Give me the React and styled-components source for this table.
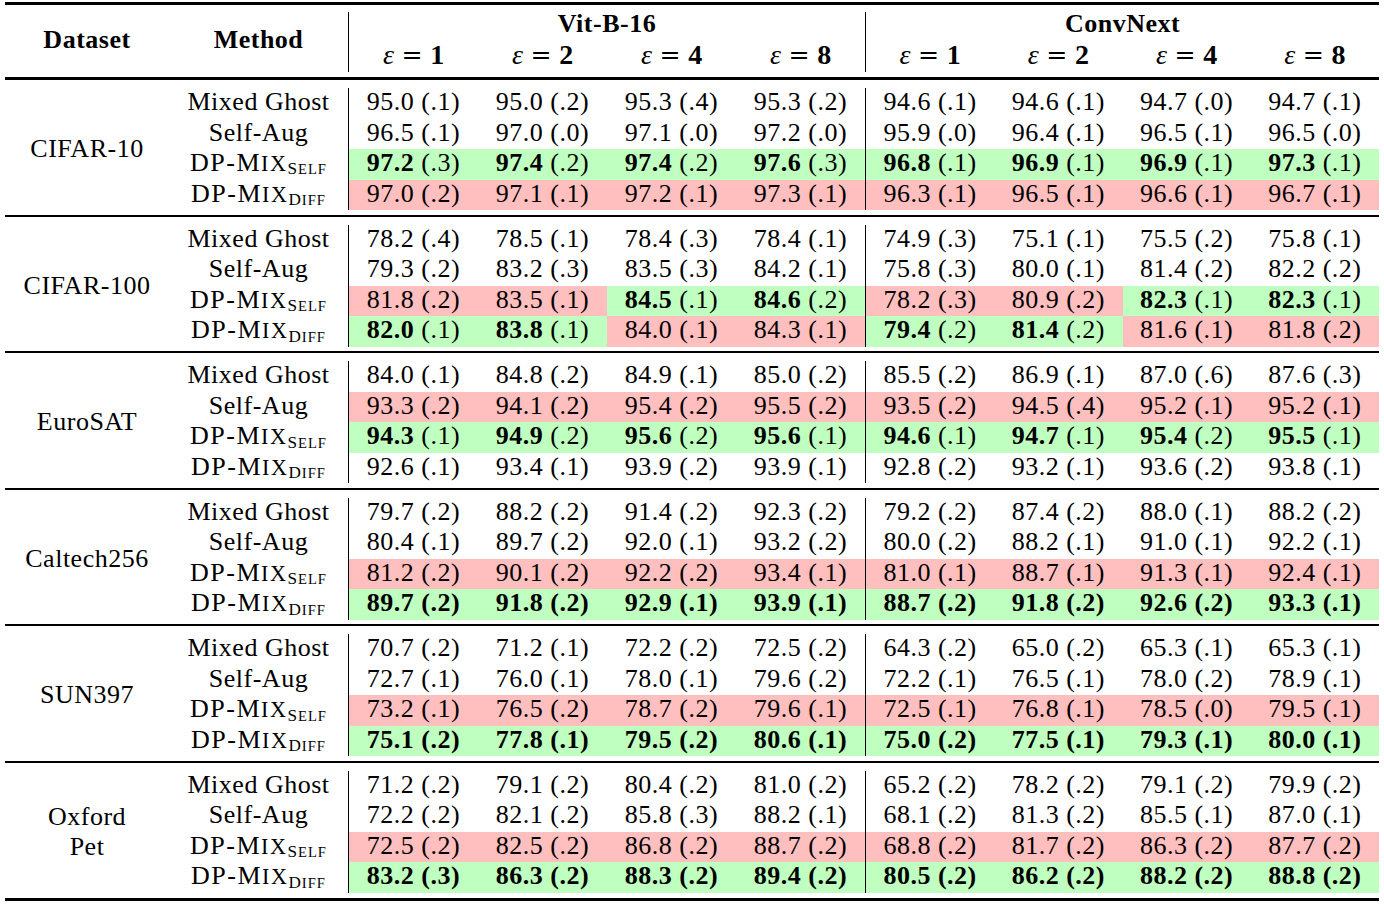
import React from 'react';
import styled, { createGlobalStyle } from 'styled-components';

const GlobalStyle = createGlobalStyle`
  html, body { margin: 0; padding: 0; background: #ffffff; }
  body {
    font-family: "Liberation Serif", "Times New Roman", serif;
    color: #000000;
  }
`;

const COLS = '164px 179px 1px repeat(4, 129px) 1px repeat(4, 1fr)';

const Table = styled.div`
  width: 1374px;
  margin: 2px 0 0 5px;
  border-top: 3px solid #000;
  border-bottom: 3px solid #000;
  font-size: 26px;
  letter-spacing: 0.5px;
`;

const Header = styled.div`
  display: grid;
  grid-template-columns: ${COLS};
  grid-template-rows: 30px 30px;
  padding: 7px 0 5px;
  border-bottom: 3px solid #000;
  line-height: 24px;
`;

const HeadLabel = styled.div`
  grid-column: ${p => p.$col};
  grid-row: 1 / 3;
  align-self: center;
  padding-bottom: 5px;
  text-align: center;
  font-weight: 700;
`;

const ModelHead = styled.div`
  grid-column: ${p => p.$col} / span 4;
  grid-row: 1;
  align-self: start;
  text-align: center;
  font-weight: 700;
`;

const EpsHead = styled.div`
  align-self: start;
  padding-top: 1px;
  text-align: center;
  white-space: nowrap;
  font-size: 28px;
  letter-spacing: 0;
`;

const Eps = styled.i`
  font-style: italic;
`;

const Eq = styled.span`
  display: inline-block;
  margin: 0 0.3em;
  font-family: "DejaVu Serif", "Liberation Serif", serif;
  font-size: 0.9em;
`;

const EpsNum = styled.b`
  font-weight: 700;
`;

const VRule = styled.div`
  grid-column: ${p => p.$col};
  grid-row: 1 / -1;
  background: #000;
  width: 1px;
`;

const Block = styled.div`
  display: grid;
  grid-template-columns: ${COLS};
  grid-template-rows: repeat(4, 30.5px);
  padding: 8px 0 4.6px;
  line-height: 27px;
  & + & {
    border-top: 2px solid #000;
  }
`;

const DatasetCell = styled.div`
  grid-column: 1;
  grid-row: 1 / -1;
  align-self: center;
  text-align: center;
  line-height: 30px;
`;

const MethodCell = styled.div`
  text-align: center;
  white-space: nowrap;
`;

const MixName = styled.span`
  letter-spacing: 1.5px;
`;

const Sc = styled.span`
  font-size: 0.85em;
`;

const Sub = styled.span`
  font-size: 0.66em;
  vertical-align: -0.2em;
  line-height: 1;
  letter-spacing: 1px;
`;

const Value = styled.div`
  text-align: center;
  white-space: nowrap;
  background: ${p => (p.$tone === 'g' ? '#bfffbf' : p.$tone === 'r' ? '#ffbfbf' : 'transparent')};
`;

const Strong = styled.b`
  font-weight: 700;
`;

const METHODS = ['mg', 'sa', 'self', 'diff'];

const data = [
  {
    name: ['CIFAR-10'],
    boldAll: false,
    tones: ['', '', 'gggggggg', 'rrrrrrrr'],
    rows: [
      ['95.0 (.1)', '95.0 (.2)', '95.3 (.4)', '95.3 (.2)', '94.6 (.1)', '94.6 (.1)', '94.7 (.0)', '94.7 (.1)'],
      ['96.5 (.1)', '97.0 (.0)', '97.1 (.0)', '97.2 (.0)', '95.9 (.0)', '96.4 (.1)', '96.5 (.1)', '96.5 (.0)'],
      ['97.2 (.3)', '97.4 (.2)', '97.4 (.2)', '97.6 (.3)', '96.8 (.1)', '96.9 (.1)', '96.9 (.1)', '97.3 (.1)'],
      ['97.0 (.2)', '97.1 (.1)', '97.2 (.1)', '97.3 (.1)', '96.3 (.1)', '96.5 (.1)', '96.6 (.1)', '96.7 (.1)'],
    ],
  },
  {
    name: ['CIFAR-100'],
    boldAll: false,
    tones: ['', '', 'rrggrrgg', 'ggrrggrr'],
    rows: [
      ['78.2 (.4)', '78.5 (.1)', '78.4 (.3)', '78.4 (.1)', '74.9 (.3)', '75.1 (.1)', '75.5 (.2)', '75.8 (.1)'],
      ['79.3 (.2)', '83.2 (.3)', '83.5 (.3)', '84.2 (.1)', '75.8 (.3)', '80.0 (.1)', '81.4 (.2)', '82.2 (.2)'],
      ['81.8 (.2)', '83.5 (.1)', '84.5 (.1)', '84.6 (.2)', '78.2 (.3)', '80.9 (.2)', '82.3 (.1)', '82.3 (.1)'],
      ['82.0 (.1)', '83.8 (.1)', '84.0 (.1)', '84.3 (.1)', '79.4 (.2)', '81.4 (.2)', '81.6 (.1)', '81.8 (.2)'],
    ],
  },
  {
    name: ['EuroSAT'],
    boldAll: false,
    tones: ['', 'rrrrrrrr', 'gggggggg', ''],
    rows: [
      ['84.0 (.1)', '84.8 (.2)', '84.9 (.1)', '85.0 (.2)', '85.5 (.2)', '86.9 (.1)', '87.0 (.6)', '87.6 (.3)'],
      ['93.3 (.2)', '94.1 (.2)', '95.4 (.2)', '95.5 (.2)', '93.5 (.2)', '94.5 (.4)', '95.2 (.1)', '95.2 (.1)'],
      ['94.3 (.1)', '94.9 (.2)', '95.6 (.2)', '95.6 (.1)', '94.6 (.1)', '94.7 (.1)', '95.4 (.2)', '95.5 (.1)'],
      ['92.6 (.1)', '93.4 (.1)', '93.9 (.2)', '93.9 (.1)', '92.8 (.2)', '93.2 (.1)', '93.6 (.2)', '93.8 (.1)'],
    ],
  },
  {
    name: ['Caltech256'],
    boldAll: true,
    tones: ['', '', 'rrrrrrrr', 'gggggggg'],
    rows: [
      ['79.7 (.2)', '88.2 (.2)', '91.4 (.2)', '92.3 (.2)', '79.2 (.2)', '87.4 (.2)', '88.0 (.1)', '88.2 (.2)'],
      ['80.4 (.1)', '89.7 (.2)', '92.0 (.1)', '93.2 (.2)', '80.0 (.2)', '88.2 (.1)', '91.0 (.1)', '92.2 (.1)'],
      ['81.2 (.2)', '90.1 (.2)', '92.2 (.2)', '93.4 (.1)', '81.0 (.1)', '88.7 (.1)', '91.3 (.1)', '92.4 (.1)'],
      ['89.7 (.2)', '91.8 (.2)', '92.9 (.1)', '93.9 (.1)', '88.7 (.2)', '91.8 (.2)', '92.6 (.2)', '93.3 (.1)'],
    ],
  },
  {
    name: ['SUN397'],
    boldAll: true,
    tones: ['', '', 'rrrrrrrr', 'gggggggg'],
    rows: [
      ['70.7 (.2)', '71.2 (.1)', '72.2 (.2)', '72.5 (.2)', '64.3 (.2)', '65.0 (.2)', '65.3 (.1)', '65.3 (.1)'],
      ['72.7 (.1)', '76.0 (.1)', '78.0 (.1)', '79.6 (.2)', '72.2 (.1)', '76.5 (.1)', '78.0 (.2)', '78.9 (.1)'],
      ['73.2 (.1)', '76.5 (.2)', '78.7 (.2)', '79.6 (.1)', '72.5 (.1)', '76.8 (.1)', '78.5 (.0)', '79.5 (.1)'],
      ['75.1 (.2)', '77.8 (.1)', '79.5 (.2)', '80.6 (.1)', '75.0 (.2)', '77.5 (.1)', '79.3 (.1)', '80.0 (.1)'],
    ],
  },
  {
    name: ['Oxford', 'Pet'],
    boldAll: true,
    tones: ['', '', 'rrrrrrrr', 'gggggggg'],
    rows: [
      ['71.2 (.2)', '79.1 (.2)', '80.4 (.2)', '81.0 (.2)', '65.2 (.2)', '78.2 (.2)', '79.1 (.2)', '79.9 (.2)'],
      ['72.2 (.2)', '82.1 (.2)', '85.8 (.3)', '88.2 (.1)', '68.1 (.2)', '81.3 (.2)', '85.5 (.1)', '87.0 (.1)'],
      ['72.5 (.2)', '82.5 (.2)', '86.8 (.2)', '88.7 (.2)', '68.8 (.2)', '81.7 (.2)', '86.3 (.2)', '87.7 (.2)'],
      ['83.2 (.3)', '86.3 (.2)', '88.3 (.2)', '89.4 (.2)', '80.5 (.2)', '86.2 (.2)', '88.2 (.2)', '88.8 (.2)'],
    ],
  },
];

function MethodName({ id }) {
  if (id === 'mg') return <>Mixed Ghost</>;
  if (id === 'sa') return <>Self-Aug</>;
  const sub = id === 'self' ? ['S', 'ELF'] : ['D', 'IFF'];
  return (
    <MixName>
      DP-M<Sc>IX</Sc>
      <Sub>
        {sub[0]}
        <Sc>{sub[1]}</Sc>
      </Sub>
    </MixName>
  );
}

function CellText({ text, bold, boldAll }) {
  if (!bold) return <>{text}</>;
  if (boldAll) return <Strong>{text}</Strong>;
  const [num, rest] = text.split(' ');
  return (
    <>
      <Strong>{num}</Strong> {rest}
    </>
  );
}

const EPS = ['1', '2', '4', '8'];

export default function App() {
  return (
    <>
      <GlobalStyle />
      <Table>
        <Header>
          <HeadLabel $col={1}>Dataset</HeadLabel>
          <HeadLabel $col={2}>Method</HeadLabel>
          <VRule $col={3} />
          <ModelHead $col={4}>Vit-B-16</ModelHead>
          <VRule $col={8} />
          <ModelHead $col={9}>ConvNext</ModelHead>
          {[...EPS, ...EPS].map((e, i) => (
            <EpsHead key={i}>
              <Eps>ε</Eps>
              <Eq>=</Eq>
              <EpsNum>{e}</EpsNum>
            </EpsHead>
          ))}
        </Header>
        {data.map(block => (
          <Block key={block.name.join(' ')}>
            <DatasetCell>
              {block.name.map((n, i) => (
                <div key={i}>{n}</div>
              ))}
            </DatasetCell>
            <VRule $col={3} />
            <VRule $col={8} />
            {block.rows.map((row, r) => (
              <React.Fragment key={r}>
                <MethodCell>
                  <MethodName id={METHODS[r]} />
                </MethodCell>
                {row.map((v, c) => {
                  const tone = block.tones[r][c] || '';
                  return (
                    <Value key={c} $tone={tone}>
                      <CellText text={v} bold={tone === 'g'} boldAll={block.boldAll} />
                    </Value>
                  );
                })}
              </React.Fragment>
            ))}
          </Block>
        ))}
      </Table>
    </>
  );
}
